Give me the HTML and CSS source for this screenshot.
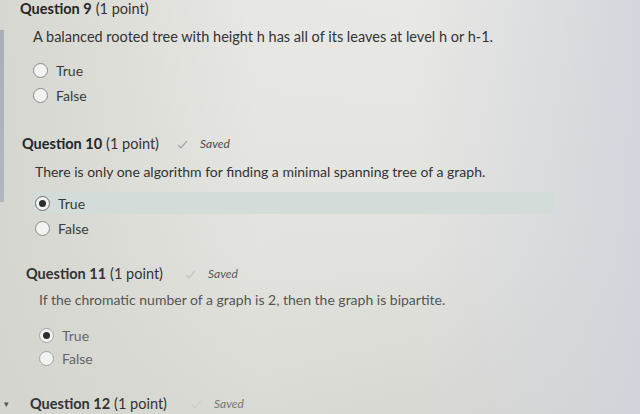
FILE: index.html
```html
<!DOCTYPE html>
<html>
<head>
<meta charset="utf-8">
<link rel="stylesheet" href="styles.css">
</head>
<body>
<div class="page">
  <div class="rail"></div>
  <main class="quiz">
    <section class="question q9">
      <h2 class="q-head"><strong>Question 9</strong><span class="points">(1 point)</span></h2>
      <p class="q-text">A balanced rooted tree with height h has all of its leaves at level h or h-1.</p>
      <ul class="options">
        <li class="option"><span class="radio"></span><span class="label">True</span></li>
        <li class="option"><span class="radio"></span><span class="label">False</span></li>
      </ul>
    </section>
    <section class="question q10">
      <h2 class="q-head"><strong>Question 10</strong><span class="points">(1 point)</span>
        <span class="saved"><svg class="check" viewBox="0 0 12 10" width="11" height="9"><path d="M1 5.5 L4.2 8.5 L11 1.2" fill="none" stroke="#a9acad" stroke-width="1.6"/></svg><em>Saved</em></span></h2>
      <p class="q-text">There is only one algorithm for finding a minimal spanning tree of a graph.</p>
      <ul class="options">
        <li class="option selected highlight"><span class="radio"></span><span class="label">True</span></li>
        <li class="option"><span class="radio"></span><span class="label">False</span></li>
      </ul>
    </section>
    <section class="question q11">
      <h2 class="q-head"><strong>Question 11</strong><span class="points">(1 point)</span>
        <span class="saved"><svg class="check" viewBox="0 0 12 10" width="11" height="9"><path d="M1 5.5 L4.2 8.5 L11 1.2" fill="none" stroke="#c6c8c6" stroke-width="1.6"/></svg><em>Saved</em></span></h2>
      <p class="q-text faded">If the chromatic number of a graph is 2, then the graph is bipartite.</p>
      <ul class="options faded">
        <li class="option selected"><span class="radio"></span><span class="label">True</span></li>
        <li class="option"><span class="radio"></span><span class="label">False</span></li>
      </ul>
    </section>
    <section class="question q12">
      <h2 class="q-head"><span class="caret">&#9662;</span><strong>Question 12</strong><span class="points">(1 point)</span>
        <span class="saved"><svg class="check" viewBox="0 0 12 10" width="11" height="9"><path d="M1 5.5 L4.2 8.5 L11 1.2" fill="none" stroke="#cfd0ce" stroke-width="1.6"/></svg><em>Saved</em></span></h2>
    </section>
  </main>
</div>
</body>
</html>
```
FILE: styles.css
```css
html, body {
  margin: 0;
  padding: 0;
  width: 640px;
  height: 414px;
  overflow: hidden;
}
body {
  font-family: Lato, "Open Sans", sans-serif;
  color: #2b2b2b;
  background:
    linear-gradient(90deg, rgba(212,212,206,0.85) 0%, rgba(228,228,224,0.2) 40%, rgba(236,236,234,0) 65%, rgba(208,211,220,0.85) 100%),
    linear-gradient(180deg, #e8e8e4 0%, #e2e2de 60%, #d8d8d2 100%);
}
.page {
  display: flex;
  height: 414px;
}
.rail {
  flex: 0 0 4px;
  margin-top: 30px;
  height: 172px;
  background: linear-gradient(180deg, #a9aeb6, #b3b7bd);
}
.quiz {
  flex: 1;
  padding-left: 16px;
}
.question {
  margin-bottom: 25px;
}
.q9 { margin-bottom: 27px; }
.q10 { margin-left: 2px; margin-bottom: 24px; }
.q11 { margin-left: 6px; margin-bottom: 25px; }
.q12 { margin-left: 10px; }
.q-head {
  margin: 0;
  height: 18px;
  line-height: 18px;
  font-size: 14.5px;
  font-weight: 400;
  color: #262626;
  display: flex;
  align-items: center;
  white-space: nowrap;
}
.q-head strong {
  font-weight: 700;
}
.points { color: #333; margin-left: 4px; }
.q11 .q-head, .q12 .q-head { color: #343434; }
.saved {
  display: inline-flex;
  align-items: center;
  margin-left: 18px;
  font-size: 12px;
  color: #4c4c4c;
}
.saved .check { margin-right: 12px; }
.q11 .saved { margin-left: 22px; color: #5a5a5a; }
.q12 .saved { margin-left: 24px; color: #777; }
.caret {
  font-size: 9px;
  color: #555;
  margin-left: -26px;
  width: 26px;
}
.q-text {
  margin: 10px 0 0 13px;
  height: 18px;
  line-height: 18px;
  font-size: 14px;
  color: #333;
}
.q9 .q-text { font-size: 14.5px; }
.q-text.faded { color: #555; }
.q11 .q-text { margin-top: 8px; }
.options {
  list-style: none;
  margin: 12px 0 0 13px;
  padding: 0;
}
.q10 .options { margin-top: 11px; }
.q11 .options { margin-top: 15px; }
.q11 .option { height: 23px; }
.option {
  height: 25px;
  display: flex;
  align-items: center;
  font-size: 14px;
  color: #3a3a3a;
}
.options.faded .option { color: #666; }
.option.highlight {
  margin-left: -2px;
  padding-left: 2px;
  width: 519px;
  height: 22px;
  margin-top: 1px;
  margin-bottom: 2px;
  background: #d3dcd9;
}
.radio {
  box-sizing: border-box;
  width: 15px;
  height: 15px;
  border-radius: 50%;
  border: 1.3px solid #8a8a8a;
  background: #f2f2f0;
  margin-right: 8px;
  display: inline-flex;
  align-items: center;
  justify-content: center;
}
.options.faded .radio { border-color: #a2a2a2; }
.selected .radio {
  border-color: #6c6c6c;
}
.selected .radio::after {
  content: "";
  width: 7px;
  height: 7px;
  border-radius: 50%;
  background: #2e2e2e;
}
```
